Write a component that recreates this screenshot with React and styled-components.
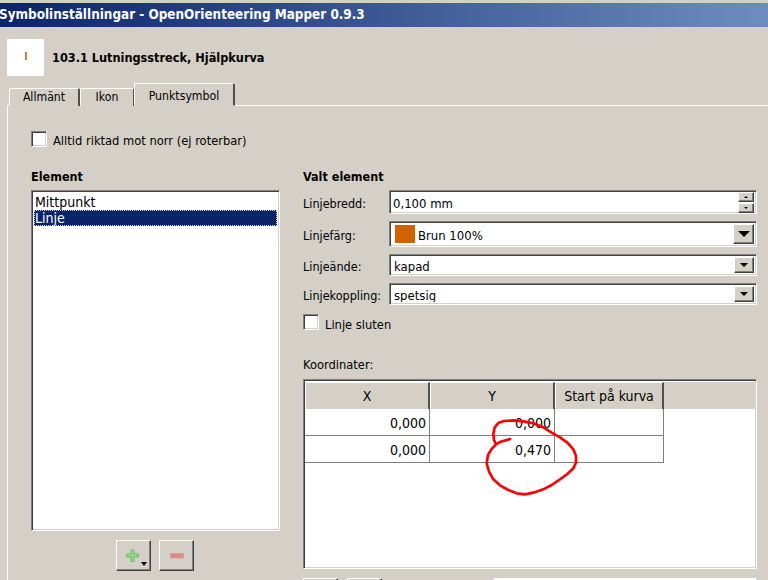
import React from "react";
import styled, { createGlobalStyle, css } from "styled-components";

const Global = createGlobalStyle`
  html, body { margin: 0; padding: 0; background: #d4d0c8; }
  body { font-family: "DejaVu Sans Condensed", "DejaVu Sans", Verdana, sans-serif; font-size: 12.8px; color: #000; }
`;

const sunken = css`
  border: 1px solid;
  border-color: #808080 #fff #fff #808080;
  box-shadow: inset 1px 1px 0 #404040, inset -1px -1px 0 #d4d0c8;
  background: #fff;
  box-sizing: border-box;
`;
const raised = css`
  border: 1px solid;
  border-color: #fff #404040 #404040 #fff;
  box-shadow: inset -1px -1px 0 #808080;
  background: #d4d0c8;
  box-sizing: border-box;
`;

const Window = styled.div`
  position: relative;
  width: 768px;
  height: 580px;
  overflow: hidden;
  padding-top: 3px;
  box-sizing: border-box;
  background: #d4d0c8;
`;
const TitleBar = styled.div`
  height: 24px;
  line-height: 23px;
  background: linear-gradient(90deg, #0a246a 0%, #6d8dbe 100%);
  color: #fff;
  font-weight: bold;
  font-size: 13.4px;
  white-space: nowrap;
  text-indent: -1px;
`;
const SymbolHeader = styled.div`
  display: flex;
  align-items: center;
  gap: 8px;
  margin: 12px 0 0 7px;
  height: 37px;
`;
const SymbolPreview = styled.div`
  width: 37px;
  height: 37px;
  background: #fff;
  display: flex;
  align-items: center;
  justify-content: center;
`;
const SymbolMark = styled.div`
  width: 2px;
  height: 8px;
  background: #e07a30;
  margin-top: -4px;
`;
const SymbolName = styled.div`
  font-weight: bold;
  font-size: 12.6px;
  white-space: nowrap;
`;
const TabBar = styled.div`
  display: flex;
  align-items: flex-end;
  margin: 7px 0 -1px 9px;
  height: 23px;
  position: relative;
  z-index: 1;
`;
const Tab = styled.div`
  box-sizing: border-box;
  width: ${(p) => p.$w}px;
  height: ${(p) => (p.$active ? 23 : 18)}px;
  background: #d4d0c8;
  border-top: 1px solid #fff;
  border-left: 1px solid #fff;
  border-right: 2px solid #505050;
  border-radius: 2px 2px 0 0;
  text-align: center;
  font-size: 12.2px;
  line-height: ${(p) => (p.$active ? 22 : 16)}px;
  ${(p) => p.$active && "border-bottom: 1px solid #d4d0c8; margin-left: -1px; padding-top: 1px;"}
`;
const TabPanel = styled.div`
  margin-left: 7px;
  border-top: 1px solid #fff;
  border-left: 1px solid #fff;
  padding: 25px 0 0 23px;
`;
const CheckRow = styled.label`
  display: flex;
  align-items: center;
  gap: 6px;
  height: 16px;
`;
const CheckLabel = styled.span`
  position: relative;
  top: ${(p) => p.$top}px;
`;
const CheckBox = styled.span`
  ${sunken}
  display: block;
  width: 16px;
  height: 16px;
  flex: none;
  margin-top: -1px;
`;
const Columns = styled.div`
  display: grid;
  grid-template-columns: 249px 454px;
  column-gap: 23px;
  margin-top: 22px;
`;
const Column = styled.div`
  display: flex;
  flex-direction: column;
`;
const SectionTitle = styled.div`
  font-weight: bold;
  font-size: 12.5px;
  height: 15px;
  line-height: 15px;
  margin-bottom: 6px;
`;
const ListBox = styled.div`
  ${sunken}
  height: 341px;
  padding: 3px 2px 0 2px;
`;
const ListItem = styled.div`
  height: 16px;
  line-height: 16px;
  font-size: 14px;
  padding-left: 1px;
  box-sizing: border-box;
  ${(p) =>
    p.$selected &&
    css`
      background: #0a246a;
      color: #fff;
      outline: 1px dotted #d4d0c8;
      outline-offset: -1px;
    `}
`;
const ListActions = styled.div`
  display: flex;
  justify-content: center;
  gap: 8px;
  margin-top: 9px;
  padding-right: 1px;
`;
const IconButton = styled.div`
  ${raised}
  position: relative;
  width: 35px;
  height: 31px;
  display: flex;
  align-items: center;
  justify-content: center;
`;
const MenuArrow = styled.span`
  position: absolute;
  right: 3px;
  bottom: 4px;
  width: 0;
  height: 0;
  border-left: 3.5px solid transparent;
  border-right: 3.5px solid transparent;
  border-top: 4px solid #000;
`;
const FormGrid = styled.div`
  display: grid;
  grid-template-columns: 86px 368px;
  align-items: center;
  row-gap: 7px;
`;
const FieldLabel = styled.div`
  font-size: 12.5px;
  white-space: nowrap;
  position: relative;
  top: 1px;
`;
const Field = styled.div`
  ${sunken}
  height: ${(p) => p.$h}px;
  display: flex;
  align-items: center;
  padding: 0 2px 0 ${(p) => p.$pl}px;
  font-size: 13px;
`;
const FieldText = styled.span`
  flex: 1;
  min-width: 0;
  padding-top: 2px;
`;
const ClippedText = styled(FieldText)`
  padding-top: 0;
  height: 15px;
  line-height: 17px;
  overflow: hidden;
`;
const Swatch = styled.span`
  width: 20px;
  height: 18px;
  background: #d16200;
  margin-right: 3px;
  flex: none;
`;
const SpinColumn = styled.div`
  display: flex;
  flex-direction: column;
  gap: 1px;
`;
const SpinButton = styled.div`
  ${raised}
  width: 16px;
  height: 10px;
  display: flex;
  align-items: center;
  justify-content: center;
`;
const SpinUp = styled.span`
  border-left: 2px solid transparent;
  border-right: 2px solid transparent;
  border-bottom: 2px solid #000;
`;
const SpinDown = styled.span`
  border-left: 2px solid transparent;
  border-right: 2px solid transparent;
  border-top: 2px solid #000;
`;
const ComboButton = styled.div`
  ${raised}
  width: ${(p) => p.$w}px;
  height: ${(p) => p.$h}px;
  display: flex;
  align-items: center;
  justify-content: center;
  flex: none;
`;
const ComboArrow = styled.span`
  border-left: ${(p) => p.$s}px solid transparent;
  border-right: ${(p) => p.$s}px solid transparent;
  border-top: ${(p) => p.$t}px solid #000;
`;
const ClosedRow = styled(CheckRow)`
  margin-top: 9px;
`;
const CoordLabel = styled.div`
  margin-top: 27px;
  height: 15px;
  line-height: 15px;
  margin-bottom: 7px;
`;
const TableFrame = styled.div`
  ${sunken}
  height: 190px;
  padding: 2px 1px 0 1px;
`;
const HeaderRow = styled.div`
  display: flex;
  background: #d4d0c8;
  height: 27px;
`;
const HeaderCell = styled.div`
  width: ${(p) => p.$w}px;
  box-sizing: border-box;
  border-right: 2px solid #505050;
  border-left: 1px solid #fff;
  border-top: 1px solid #fff;
  text-align: center;
  line-height: 26px;
  font-size: 14px;
  white-space: nowrap;
`;
const DataRow = styled.div`
  display: flex;
  height: 27px;
`;
const DataCell = styled.div`
  width: ${(p) => p.$w}px;
  box-sizing: border-box;
  border-right: 1px solid #808080;
  border-bottom: 1px solid #808080;
  text-align: right;
  padding-right: 3px;
  line-height: 29px;
  font-size: 14px;
`;
const TableActions = styled.div`
  display: flex;
  align-items: flex-start;
  margin-top: 9px;
  gap: 9px;
`;
const StubButton = styled.div`
  ${raised}
  width: 35px;
  height: 28px;
`;
const StubField = styled.div`
  ${sunken}
  box-shadow: none;
  border-color: #fff;
  margin-left: 103px;
  width: 262px;
  height: 24px;
`;
const Scribble = styled.svg`
  position: absolute;
  left: 480px;
  top: 410px;
  width: 110px;
  height: 90px;
  pointer-events: none;
`;
const PlusIcon = styled.svg`
  margin-right: 2px;
`;

const Plus = () => (
  <PlusIcon width="18" height="18" viewBox="0 0 18 18">
    <path d="M7 3h3v4h4.500v3H10v4.500H7V10H2.500V7H7z" fill="#8fd88a" stroke="#6cbc68" strokeWidth="1" />
  </PlusIcon>
);
const Minus = () => (
  <svg width="16" height="8" viewBox="0 0 16 8">
    <rect x="1.5" y="1.5" width="13" height="4.5" fill="#dd8a84" stroke="#d9a09a" />
  </svg>
);

const cols = [125, 125, 109];

const scribble =
  "90,87 62,95 48,103 42,90 40,72 44,52 56,38 72,33 100,31 130,34 160,40 190,52 215,68 240,82 262,98 280,118 288,138 288,158 280,175 262,192 240,208 215,225 190,238 160,248 135,253 110,250 85,240 60,226 40,208 27,185 20,160 24,135 34,118 48,103";

export default function App() {
  return (
    <Window>
      <Global />
      <TitleBar>Symbolinställningar - OpenOrienteering Mapper 0.9.3</TitleBar>
      <SymbolHeader>
        <SymbolPreview>
          <SymbolMark />
        </SymbolPreview>
        <SymbolName>103.1 Lutningsstreck, Hjälpkurva</SymbolName>
      </SymbolHeader>
      <TabBar>
        <Tab $w={71}>Allmänt</Tab>
        <Tab $w={55}>Ikon</Tab>
        <Tab $w={101} $active>Punktsymbol</Tab>
      </TabBar>
      <TabPanel>
        <CheckRow>
          <CheckBox />
          <CheckLabel $top={1}>Alltid riktad mot norr (ej roterbar)</CheckLabel>
        </CheckRow>
        <Columns>
          <Column>
            <SectionTitle>Element</SectionTitle>
            <ListBox>
              <ListItem>Mittpunkt</ListItem>
              <ListItem $selected>Linje</ListItem>
            </ListBox>
            <ListActions>
              <IconButton>
                <Plus />
                <MenuArrow />
              </IconButton>
              <IconButton>
                <Minus />
              </IconButton>
            </ListActions>
          </Column>
          <Column>
            <SectionTitle>Valt element</SectionTitle>
            <FormGrid>
              <FieldLabel>Linjebredd:</FieldLabel>
              <Field $h={24} $pl={3}>
                <FieldText>0,100 mm</FieldText>
                <SpinColumn>
                  <SpinButton><SpinUp /></SpinButton>
                  <SpinButton><SpinDown /></SpinButton>
                </SpinColumn>
              </Field>
              <FieldLabel>Linjefärg:</FieldLabel>
              <Field $h={26} $pl={5}>
                <Swatch />
                <FieldText>Brun 100%</FieldText>
                <ComboButton $w={21} $h={20}><ComboArrow $s={6} $t={6} /></ComboButton>
              </Field>
              <FieldLabel>Linjeände:</FieldLabel>
              <Field $h={22} $pl={4}>
                <ClippedText>kapad</ClippedText>
                <ComboButton $w={20} $h={16}><ComboArrow $s={4} $t={4} /></ComboButton>
              </Field>
              <FieldLabel>Linjekoppling:</FieldLabel>
              <Field $h={22} $pl={4}>
                <ClippedText>spetsig</ClippedText>
                <ComboButton $w={20} $h={16}><ComboArrow $s={4} $t={4} /></ComboButton>
              </Field>
            </FormGrid>
            <ClosedRow>
              <CheckBox />
              <CheckLabel $top={2}>Linje sluten</CheckLabel>
            </ClosedRow>
            <CoordLabel>Koordinater:</CoordLabel>
            <TableFrame>
              <HeaderRow>
                <HeaderCell $w={cols[0]}>X</HeaderCell>
                <HeaderCell $w={cols[1]}>Y</HeaderCell>
                <HeaderCell $w={cols[2]}>Start på kurva</HeaderCell>
              </HeaderRow>
              <DataRow>
                <DataCell $w={cols[0]}>0,000</DataCell>
                <DataCell $w={cols[1]}>0,000</DataCell>
                <DataCell $w={cols[2]} />
              </DataRow>
              <DataRow>
                <DataCell $w={cols[0]}>0,000</DataCell>
                <DataCell $w={cols[1]}>0,470</DataCell>
                <DataCell $w={cols[2]} />
              </DataRow>
            </TableFrame>
            <TableActions>
              <StubButton />
              <StubButton />
              <StubField />
            </TableActions>
          </Column>
        </Columns>
      </TabPanel>
      <Scribble viewBox="0 0 330 270">
        <polyline
          points={scribble}
          fill="none"
          stroke="#f00"
          strokeWidth="8"
          strokeLinecap="round"
          strokeLinejoin="round"
        />
      </Scribble>
    </Window>
  );
}
